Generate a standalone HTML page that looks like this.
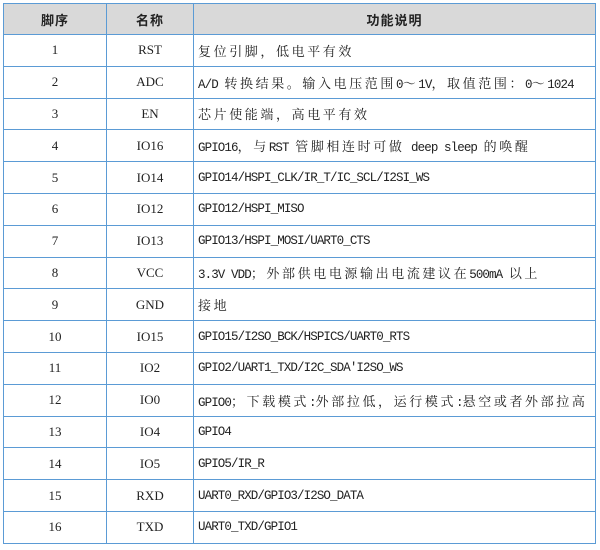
<!DOCTYPE html><html><head><meta charset="utf-8"><style>
body{margin:0;background:#fff;width:600px;height:550px;overflow:hidden}
table{position:absolute;left:3px;top:3px;width:593px;border-collapse:collapse;table-layout:fixed;font-family:"Liberation Serif","Noto Serif CJK SC",serif;font-size:13px;color:#222}
td,th{border:1px solid #5b9bd5;padding:0;height:30.8px;text-align:center}
th{background:#d9d9d9;font-family:"Noto Sans CJK SC",sans-serif;font-weight:bold;font-size:13px;height:30px;letter-spacing:1px}
td.d{text-align:left;padding-left:4px;font-family:"Liberation Mono","Noto Serif CJK SC",monospace;font-size:12.5px;letter-spacing:-0.9px;white-space:nowrap}
.c{font-family:"Noto Serif CJK SC",serif;font-size:13px;letter-spacing:2.6px}
</style></head><body>
<table>
<colgroup><col style="width:103px"><col style="width:87px"><col></colgroup>
<tr><th>脚序</th><th>名称</th><th>功能说明</th></tr>
<tr><td>1</td><td>RST</td><td class="d"><span class="c">复位引脚，低电平有效</span></td></tr>
<tr><td>2</td><td>ADC</td><td class="d">A/D <span class="c">转换结果。输入电压范围</span>0<span class="c">～</span>1V<span class="c">，取值范围：</span>0<span class="c">～</span>1024</td></tr>
<tr><td>3</td><td>EN</td><td class="d"><span class="c">芯片使能端，高电平有效</span></td></tr>
<tr><td>4</td><td>IO16</td><td class="d">GPIO16<span class="c">，与</span>RST <span class="c">管脚相连时可做</span> deep sleep <span class="c">的唤醒</span></td></tr>
<tr><td>5</td><td>IO14</td><td class="d">GPIO14/HSPI_CLK/IR_T/IC_SCL/I2SI_WS</td></tr>
<tr><td>6</td><td>IO12</td><td class="d">GPIO12/HSPI_MISO</td></tr>
<tr><td>7</td><td>IO13</td><td class="d">GPIO13/HSPI_MOSI/UART0_CTS</td></tr>
<tr><td>8</td><td>VCC</td><td class="d">3.3V VDD<span class="c">；外部供电电源输出电流建议在</span>500mA <span class="c">以上</span></td></tr>
<tr><td>9</td><td>GND</td><td class="d"><span class="c">接地</span></td></tr>
<tr><td>10</td><td>IO15</td><td class="d">GPIO15/I2SO_BCK/HSPICS/UART0_RTS</td></tr>
<tr><td>11</td><td>IO2</td><td class="d">GPIO2/UART1_TXD/I2C_SDA'I2SO_WS</td></tr>
<tr><td>12</td><td>IO0</td><td class="d">GPIO0<span class="c">；下载模式</span>:<span class="c">外部拉低，运行模式</span>:<span class="c">悬空或者外部拉高</span></td></tr>
<tr><td>13</td><td>IO4</td><td class="d">GPIO4</td></tr>
<tr><td>14</td><td>IO5</td><td class="d">GPIO5/IR_R</td></tr>
<tr><td>15</td><td>RXD</td><td class="d">UART0_RXD/GPIO3/I2SO_DATA</td></tr>
<tr><td>16</td><td>TXD</td><td class="d">UART0_TXD/GPIO1</td></tr>
</table>
</body></html>
